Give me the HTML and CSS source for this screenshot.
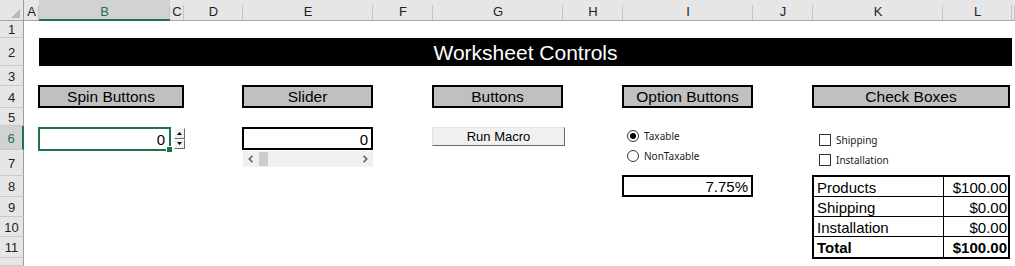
FILE: index.html
```html
<!DOCTYPE html>
<html lang="en">
<head>
<meta charset="utf-8">
<title>Worksheet Controls</title>
<link rel="stylesheet" href="styles.css">
</head>
<body>
<div class="sheet">
  <div class="corner c1 r1"><svg width="9" height="9" viewBox="0 0 9 9"><polygon points="9,0 9,9 0,9" fill="#b9b9b9"/></svg></div>
  <div class="colhdr c2 r1">A</div>
  <div class="colhdr selcol c3 r1">B</div>
  <div class="colhdr c4 r1">C</div>
  <div class="colhdr c5 r1">D</div>
  <div class="colhdr c6 r1">E</div>
  <div class="colhdr c7 r1">F</div>
  <div class="colhdr c8 r1">G</div>
  <div class="colhdr c9 r1">H</div>
  <div class="colhdr c10 r1">I</div>
  <div class="colhdr c11 r1">J</div>
  <div class="colhdr c12 r1">K</div>
  <div class="colhdr c13 r1">L</div>
  <div class="colhdr c14 r1"></div>

  <div class="rowhdr c1 r2">1</div>
  <div class="rowhdr c1 r3">2</div>
  <div class="rowhdr c1 r4">3</div>
  <div class="rowhdr c1 r5">4</div>
  <div class="rowhdr c1 r6">5</div>
  <div class="rowhdr selrow c1 r7">6</div>
  <div class="rowhdr c1 r8">7</div>
  <div class="rowhdr c1 r9">8</div>
  <div class="rowhdr c1 r10">9</div>
  <div class="rowhdr c1 r11">10</div>
  <div class="rowhdr c1 r12">11</div>
  <div class="rowhdr c1 r13"></div>

  <div class="title cols-bl r3">Worksheet Controls</div>

  <div class="label spin-label cols-bc r5">Spin Buttons</div>
  <div class="label c6 r5">Slider</div>
  <div class="label c8 r5">Buttons</div>
  <div class="label c10 r5">Option Buttons</div>
  <div class="label check-label cols-kl r5">Check Boxes</div>

  <div class="selcell c3 r7">0<span class="fill-handle"></span></div>
  <div class="spinner c4 r7">
    <span class="spin-btn"><svg width="5" height="3" viewBox="0 0 5 3"><polygon points="0,3 5,3 2.5,0" fill="#000"/></svg></span>
    <span class="spin-btn"><svg width="5" height="3" viewBox="0 0 5 3"><polygon points="0,0 5,0 2.5,3" fill="#000"/></svg></span>
  </div>

  <div class="boxcell slider-cell c6 r7">0</div>
  <div class="scrollbar c6 r8">
    <span class="sb-arrow"><svg width="6" height="8" viewBox="0 0 6 8"><polyline points="4.5,0.8 1.3,4 4.5,7.2" fill="none" stroke="#606060" stroke-width="1.6"/></svg></span>
    <span class="sb-thumb"></span>
    <span class="sb-track"></span>
    <span class="sb-arrow"><svg width="6" height="8" viewBox="0 0 6 8"><polyline points="1.5,0.8 4.7,4 1.5,7.2" fill="none" stroke="#606060" stroke-width="1.6"/></svg></span>
  </div>

  <div class="macro-btn c8 r7">Run Macro</div>

  <div class="options c10 rows-67">
    <div class="opt"><span class="radio"><span class="dot"></span></span>Taxable</div>
    <div class="opt"><span class="radio"></span>NonTaxable</div>
  </div>

  <div class="checks cols-kl rows-67">
    <div class="opt"><span class="check"></span>Shipping</div>
    <div class="opt"><span class="check"></span>Installation</div>
  </div>

  <div class="boxcell rate-cell c10 r9">7.75%</div>

  <div class="totals cols-kl rows-811">
    <div class="t-name">Products</div><div class="t-val">$100.00</div>
    <div class="t-name">Shipping</div><div class="t-val">$0.00</div>
    <div class="t-name">Installation</div><div class="t-val">$0.00</div>
    <div class="t-name t-total">Total</div><div class="t-val t-total">$100.00</div>
  </div>
</div>
</body>
</html>
```

FILE: styles.css
```css
* { box-sizing: border-box; margin: 0; padding: 0; }
html, body { width: 1015px; height: 266px; overflow: hidden; background: #fff; }
body { font-family: "Liberation Sans", Arial, sans-serif; color: #000; }

.sheet {
  display: grid;
  grid-template-columns: 24px 15px 131px 14px 59px 130px 60px 130px 60px 130px 60px 130px 69px 1fr;
  grid-template-rows: 21px 17px 28px 20px 22px 18px 24px 26px 21px 20px 20px 21px 1fr;
  width: 1015px;
  height: 266px;
}

/* grid placement */
.c1 { grid-column: 1; } .c2 { grid-column: 2; } .c3 { grid-column: 3; } .c4 { grid-column: 4; }
.c5 { grid-column: 5; } .c6 { grid-column: 6; } .c7 { grid-column: 7; } .c8 { grid-column: 8; }
.c9 { grid-column: 9; } .c10 { grid-column: 10; } .c11 { grid-column: 11; } .c12 { grid-column: 12; }
.c13 { grid-column: 13; } .c14 { grid-column: 14; }
.r1 { grid-row: 1; } .r2 { grid-row: 2; } .r3 { grid-row: 3; } .r4 { grid-row: 4; }
.r5 { grid-row: 5; } .r6 { grid-row: 6; } .r7 { grid-row: 7; } .r8 { grid-row: 8; }
.r9 { grid-row: 9; } .r10 { grid-row: 10; } .r11 { grid-row: 11; } .r12 { grid-row: 12; }
.r13 { grid-row: 13; }
.cols-bc { grid-column: 3 / 5; }
.cols-bl { grid-column: 3 / 14; }
.cols-kl { grid-column: 12 / 14; }
.rows-67 { grid-row: 7 / 9; }
.rows-811 { grid-row: 9 / 13; }

/* headers */
.corner {
  background: #e6e6e6;
  border-right: 1px solid #9e9e9e;
  border-bottom: 1px solid #a6a6a6;
  display: flex;
  justify-content: flex-end;
  align-items: flex-end;
  padding: 0 3px 2px 0;
}
.colhdr {
  background: linear-gradient(#c4c4c4, #c4c4c4) right 5px / 1px 100% no-repeat, #e6e6e6;
  border-bottom: 1px solid #a6a6a6;
  display: flex;
  align-items: center;
  justify-content: center;
  padding-top: 2px;
  font-size: 13px;
  color: #222;
}
.colhdr.selcol {
  background-color: #d2d2d2;
  border-bottom: 2px solid #217346;
  padding-top: 3px;
  color: #217346;
}
.rowhdr {
  background: #e6e6e6;
  border-right: 1px solid #9e9e9e;
  border-bottom: 1px solid #c9c9c9;
  display: flex;
  align-items: center;
  justify-content: center;
  font-size: 13px;
  color: #222;
  padding-top: 1px;
}
.rowhdr.selrow {
  background-color: #d2d2d2;
  border-right: 2px solid #217346;
  color: #217346;
}

/* title */
.title {
  background: #000;
  color: #fff;
  font-size: 21px;
  display: flex;
  align-items: center;
  justify-content: center;
  padding-top: 1px;
}

/* section labels */
.label {
  margin: -1px 0 0 -1px;
  background: #c0c0c0;
  border: 2px solid #000;
  font-size: 15.5px;
  display: flex;
  align-items: center;
  justify-content: center;
  padding-top: 1px;
}
.check-label { margin-right: 2px; }

/* selected cell B6 */
.selcell {
  position: relative;
  margin: 1px -1px -1px -1px;
  border: 2px solid #217346;
  font-size: 15px;
  display: flex;
  align-items: center;
  justify-content: flex-end;
  padding: 1px 4px 0 0;
}
.fill-handle {
  position: absolute;
  right: -3px;
  bottom: -3px;
  width: 6px;
  height: 6px;
  background: #217346;
  border-top: 1px solid #fff;
  border-left: 1px solid #fff;
}

/* spin control */
.spinner {
  justify-self: start;
  align-self: start;
  margin: 2px 0 0 4px;
  width: 11px;
  height: 21px;
  display: flex;
  flex-direction: column;
}
.spin-btn {
  flex: 1;
  display: flex;
  align-items: center;
  justify-content: center;
  background: #f0f0f0;
  border-top: 1px solid #fff;
  border-left: 1px solid #fff;
  border-right: 1px solid #696969;
  border-bottom: 1px solid #696969;
}

/* bordered value cells */
.boxcell {
  border: 2px solid #000;
  font-size: 15px;
  display: flex;
  align-items: center;
  justify-content: flex-end;
  padding: 1px 3px 0 0;
}
.slider-cell { margin: 1px 0 0 -1px; }
.rate-cell { margin: -1px 0 0 -1px; }

/* scrollbar */
.scrollbar {
  align-self: start;
  margin-top: 1px;
  height: 16px;
  background: #f0f0f0;
  display: flex;
  align-items: stretch;
}
.sb-arrow {
  width: 16px;
  display: flex;
  align-items: center;
  justify-content: center;
}
.sb-thumb {
  width: 9px;
  margin: 1px 0;
  background: #cdcdcd;
}
.sb-track { flex: 1; }

/* macro button */
.macro-btn {
  justify-self: start;
  align-self: start;
  margin: 1px 0 0 -1px;
  width: 133px;
  height: 19px;
  background: #f0f0f0;
  border-top: 1px solid #e3e3e3;
  border-left: 1px solid #e3e3e3;
  border-right: 1px solid #696969;
  border-bottom: 1px solid #696969;
  font-size: 13px;
  display: flex;
  align-items: center;
  justify-content: center;
}

/* option buttons and check boxes */
.options, .checks {
  display: flex;
  flex-direction: column;
  font-family: "Noto Sans", "Open Sans", sans-serif;
  font-size: 10px;
  color: #1a1a1a;
}
.options { padding-left: 4px; }
.checks { padding: 4px 0 0 6px; }
.opt {
  height: 20px;
  display: flex;
  align-items: center;
  gap: 5px;
}
.radio {
  width: 12px;
  height: 12px;
  border: 1px solid #333;
  border-radius: 50%;
  background: #fff;
  display: flex;
  align-items: center;
  justify-content: center;
}
.dot {
  width: 6px;
  height: 6px;
  border-radius: 50%;
  background: #000;
}
.check {
  width: 12px;
  height: 12px;
  border: 1px solid #333;
  background: #fff;
}

/* totals table */
.totals {
  margin: -1px 2px -1px -1px;
  border: 2px solid #000;
  display: grid;
  grid-template-columns: 130px 1fr;
  grid-template-rows: repeat(4, 1fr);
  font-size: 15px;
}
.t-name, .t-val {
  display: flex;
  align-items: center;
  border-bottom: 1px solid #000;
  padding-top: 1px;
}
.t-name { border-right: 1px solid #000; padding-left: 3px; }
.t-val { justify-content: flex-end; padding-right: 1px; }
.t-total { font-weight: bold; border-bottom: 0; }
```
